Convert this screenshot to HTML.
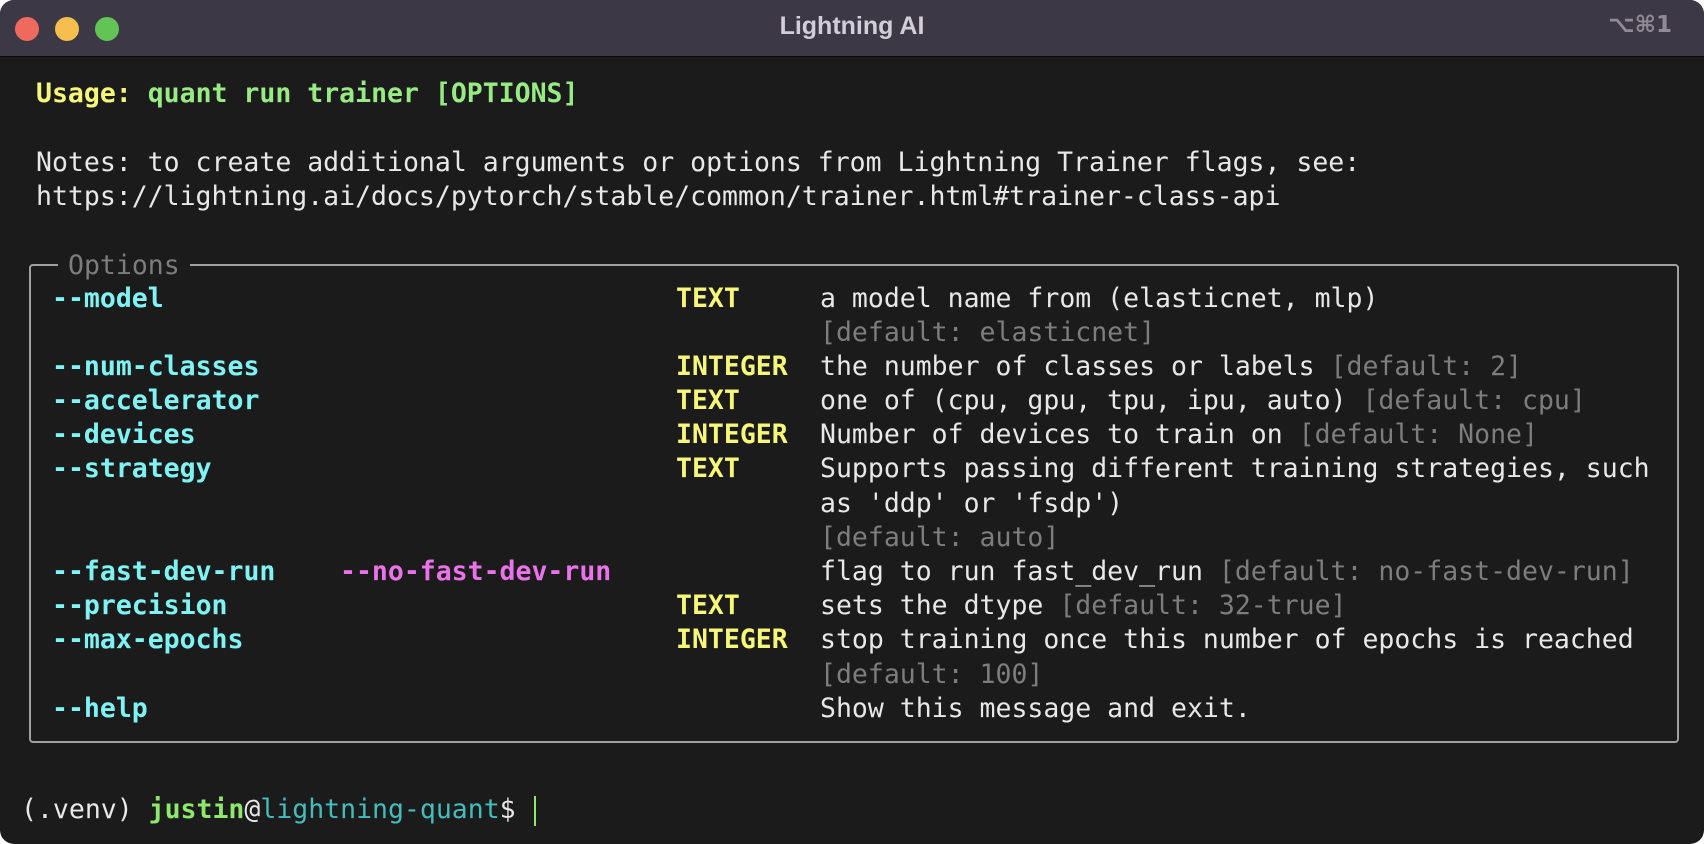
<!DOCTYPE html>
<html><head><meta charset="utf-8"><style>
html,body{margin:0;padding:0;width:1704px;height:844px;overflow:hidden;background:#ffffff;}
.win{position:absolute;left:0;top:0;width:1704px;height:844px;background:#1b1b1b;border-radius:14px;overflow:hidden;}
.tb{position:absolute;left:0;top:0;width:1704px;height:56px;background:#3d3846;border-bottom:1px solid #0c0c0c;}
.dot{position:absolute;top:17px;width:24px;height:24px;border-radius:50%;}
.title{position:absolute;left:0;width:1704px;top:12px;text-align:center;font:bold 25px "Liberation Sans",sans-serif;color:#d2ced8;}
.kb{position:absolute;right:32px;top:12px;font:bold 23px "DejaVu Sans","Liberation Sans",sans-serif;color:#8f8a96;}
.t{position:absolute;font-family:"DejaVu Sans Mono","Liberation Mono",monospace;font-size:26.5px;line-height:34.2px;white-space:pre;color:#e8e8e8;}
.b{font-weight:bold;}
.y{color:#f7f779;}
.g{color:#97ea84;}
.c{color:#80f4f4;}
.m{color:#ea72ea;}
.d{color:#7d7d7d;}
.box{position:absolute;left:29px;top:264px;width:1646px;height:475px;border:2px solid #a0a0a0;border-radius:4px;}
.lbl{position:absolute;left:58px;top:249px;background:#1b1b1b;padding:0 10px;}
</style></head><body>
<div class="win">
<div class="tb">
<div class="dot" style="left:15px;background:#ee6a5e"></div>
<div class="dot" style="left:55px;background:#f5be4f"></div>
<div class="dot" style="left:95px;background:#61c454"></div>
<div class="title">Lightning AI</div>
<div class="kb">⌥⌘1</div>
</div>
<div class="box"></div>
<div class="t d lbl" style="left:58px">Options</div>
<div class="t b" style="left:36px;top:77px"><span class="y">Usage:</span> <span class="g">quant run trainer [OPTIONS]</span></div>
<div class="t" style="left:36px;top:146px">Notes: to create additional arguments or options from Lightning Trainer flags, see:</div>
<div class="t" style="left:36px;top:180px">https://lightning.ai/docs/pytorch/stable/common/trainer.html#trainer-class-api</div>

<div class="t b c" style="left:52px;top:282px">--model</div>
<div class="t b y" style="left:676px;top:282px">TEXT</div>
<div class="t" style="left:820px;top:282px">a model name from (elasticnet, mlp)</div>
<div class="t d" style="left:820px;top:316px">[default: elasticnet]</div>

<div class="t b c" style="left:52px;top:350px">--num-classes</div>
<div class="t b y" style="left:676px;top:350px">INTEGER</div>
<div class="t" style="left:820px;top:350px">the number of classes or labels <span class="d">[default: 2]</span></div>

<div class="t b c" style="left:52px;top:384px">--accelerator</div>
<div class="t b y" style="left:676px;top:384px">TEXT</div>
<div class="t" style="left:820px;top:384px">one of (cpu, gpu, tpu, ipu, auto) <span class="d">[default: cpu]</span></div>

<div class="t b c" style="left:52px;top:418px">--devices</div>
<div class="t b y" style="left:676px;top:418px">INTEGER</div>
<div class="t" style="left:820px;top:418px">Number of devices to train on <span class="d">[default: None]</span></div>

<div class="t b c" style="left:52px;top:452px">--strategy</div>
<div class="t b y" style="left:676px;top:452px">TEXT</div>
<div class="t" style="left:820px;top:452px">Supports passing different training strategies, such</div>
<div class="t" style="left:820px;top:487px">as 'ddp' or 'fsdp')</div>
<div class="t d" style="left:820px;top:521px">[default: auto]</div>

<div class="t b c" style="left:52px;top:555px">--fast-dev-run</div>
<div class="t b m" style="left:340px;top:555px">--no-fast-dev-run</div>
<div class="t" style="left:820px;top:555px">flag to run fast_dev_run <span class="d">[default: no-fast-dev-run]</span></div>

<div class="t b c" style="left:52px;top:589px">--precision</div>
<div class="t b y" style="left:676px;top:589px">TEXT</div>
<div class="t" style="left:820px;top:589px">sets the dtype <span class="d">[default: 32-true]</span></div>

<div class="t b c" style="left:52px;top:623px">--max-epochs</div>
<div class="t b y" style="left:676px;top:623px">INTEGER</div>
<div class="t" style="left:820px;top:623px">stop training once this number of epochs is reached</div>
<div class="t d" style="left:820px;top:658px">[default: 100]</div>

<div class="t b c" style="left:52px;top:692px">--help</div>
<div class="t" style="left:820px;top:692px">Show this message and exit.</div>

<div class="t" style="left:21px;top:793px">(.venv) <span class="b" style="color:#8ee86c">justin</span>@<span style="color:#45bcbc">lightning-quant</span>$ </div>
<div style="position:absolute;left:534px;top:796px;width:2px;height:30px;background:#8ee86c"></div>
</div>
</body></html>
